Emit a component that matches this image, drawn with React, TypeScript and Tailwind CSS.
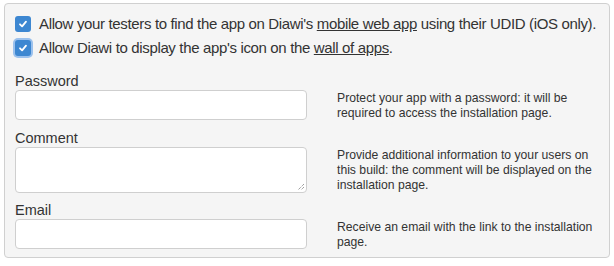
import React from "react";

function Check({ focus }: { focus?: boolean }) {
  return (
    <span
      className={
        "inline-flex h-4 w-4 shrink-0 items-center justify-center rounded-[3px] bg-[#3d87d1] " +
        (focus ? "shadow-[0_0_0_2px_rgba(80,150,230,0.55)]" : "")
      }
    >
      <svg width="10" height="10" viewBox="0 0 10 10">
        <path d="M2 5.3 L4.1 7.4 L8 2.6" fill="none" stroke="#fff" strokeWidth="1.8" strokeLinecap="round" strokeLinejoin="round" />
      </svg>
    </span>
  );
}

function Field({
  label,
  help,
  area,
}: {
  label: string;
  help: string[];
  area?: boolean;
}) {
  return (
    <div className="flex flex-col">
      <div className="text-[14.5px] leading-[16px] text-[#333] mb-px">{label}</div>
      <div className="flex items-start gap-[30px]">
        {area ? (
          <div className="relative h-[46px] w-[292px] shrink-0 rounded-[4px] border border-[#cfcfcf] bg-white">
            <svg className="absolute right-[1px] bottom-[1px]" width="8" height="8" viewBox="0 0 8 8">
              <path d="M7 1 L1 7 M7 4 L4 7" stroke="#777" strokeWidth="1" strokeDasharray="1 1" />
            </svg>
          </div>
        ) : (
          <div className="h-[30px] w-[292px] shrink-0 rounded-[4px] border border-[#cfcfcf] bg-white" />
        )}
        <div className="whitespace-nowrap pt-px text-[12.2px] leading-[15px] text-[#333]">
          {help.map((h, i) => (
            <div key={i}>{h}</div>
          ))}
        </div>
      </div>
    </div>
  );
}

export default function App() {
  return (
    <div className="h-[266px] w-[614px] bg-white pl-[4px] pt-[3px] font-['Helvetica_Neue','Liberation_Sans',Arial,sans-serif]">
      <div className="h-[255px] w-[606px] rounded-[4px] border border-[#d0d0d0] bg-[#f5f5f5] pl-[10px] pt-[8px]">
        <div className="flex h-[24px] items-center gap-[8px] whitespace-nowrap text-[15px] tracking-[-0.35px] text-[#333]">
          <Check />
          <span>
            Allow your testers to find the app on Diawi's{" "}
            <span className="underline">mobile web app</span> using their UDID (iOS only).
          </span>
        </div>
        <div className="flex h-[24px] items-center gap-[8px] whitespace-nowrap text-[15px] tracking-[-0.35px] text-[#333]">
          <Check focus />
          <span>
            Allow Diawi to display the app's icon on the{" "}
            <span className="underline">wall of apps</span>.
          </span>
        </div>
        <div className="mt-[13px] flex flex-col gap-[9px]">
          <Field
            label="Password"
            help={["Protect your app with a password: it will be", "required to access the installation page."]}
          />
          <Field
            label="Comment"
            area
            help={[
              "Provide additional information to your users on",
              "this build: the comment will be displayed on the",
              "installation page.",
            ]}
          />
          <Field
            label="Email"
            help={["Receive an email with the link to the installation", "page."]}
          />
        </div>
      </div>
    </div>
  );
}
